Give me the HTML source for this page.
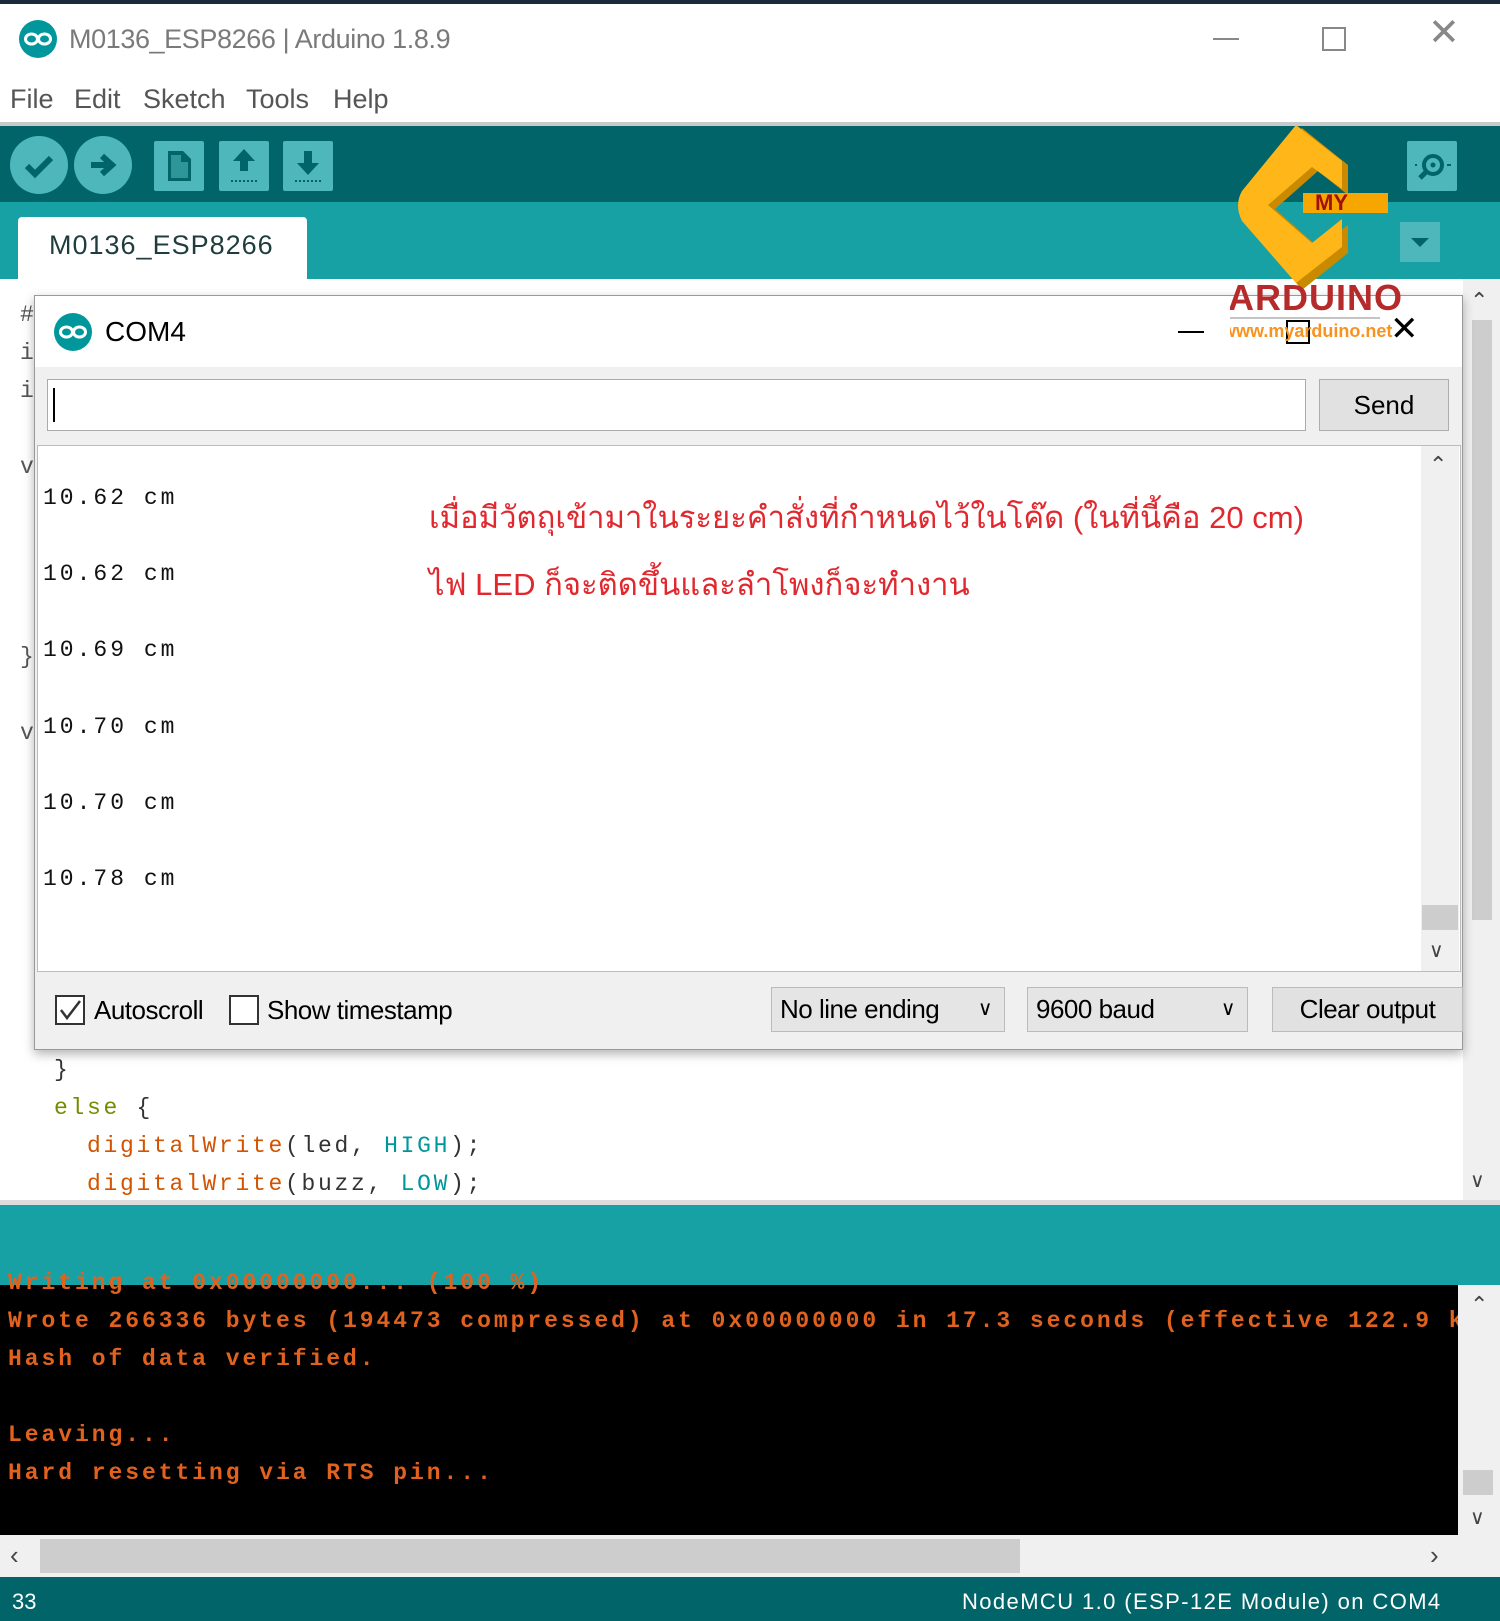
<!DOCTYPE html>
<html><head><meta charset="utf-8"><style>
*{margin:0;padding:0;box-sizing:border-box}
body{width:1500px;height:1621px;position:relative;overflow:hidden;background:#fff;font-family:"Liberation Sans",sans-serif}
.a{position:absolute}
.mono{font-family:"Liberation Mono",monospace}
.tb{background:#4db7bb;border-radius:2px}
</style></head><body>
<!-- title bar -->
<div class="a" style="left:0;top:0;width:1500px;height:4px;background:#1b2a3a"></div>
<svg class="a" style="left:19px;top:20px" width="38" height="38" viewBox="0 0 38 38"><circle cx="19" cy="19" r="19" fill="#00979c"/><ellipse cx="12.5" cy="19" rx="6" ry="5" fill="none" stroke="#fff" stroke-width="3"/><ellipse cx="25.5" cy="19" rx="6" ry="5" fill="none" stroke="#fff" stroke-width="3"/></svg>
<div class="a" style="left:69px;top:24px;font-size:27px;color:#7a7a7a;letter-spacing:-.4px">M0136_ESP8266 | Arduino 1.8.9</div>
<div class="a" style="left:1213px;top:38px;width:26px;height:2px;background:#888"></div>
<div class="a" style="left:1322px;top:27px;width:24px;height:24px;border:2px solid #888"></div>
<div class="a" style="left:1428px;top:14px;font-size:38px;color:#888;line-height:1">✕</div>
<div class="a" style="left:10px;top:84px;font-size:27px;color:#555">File</div>
<div class="a" style="left:74px;top:84px;font-size:27px;color:#555">Edit</div>
<div class="a" style="left:143px;top:84px;font-size:27px;color:#555">Sketch</div>
<div class="a" style="left:246px;top:84px;font-size:27px;color:#555">Tools</div>
<div class="a" style="left:333px;top:84px;font-size:27px;color:#555">Help</div>
<div class="a" style="left:0;top:122px;width:1500px;height:4px;background:#c9c9c9"></div>
<!-- toolbar -->
<div class="a" style="left:0;top:126px;width:1500px;height:76px;background:#006468"></div>
<div class="a" style="left:10px;top:136px;width:58px;height:58px;border-radius:50%;background:#4db7bb"></div>
<svg class="a" style="left:10px;top:136px" width="58" height="58"><path d="M17 30 L25 38 L41 22" stroke="#006468" stroke-width="6" fill="none"/></svg>
<div class="a" style="left:74px;top:136px;width:58px;height:58px;border-radius:50%;background:#4db7bb"></div>
<svg class="a" style="left:74px;top:136px" width="58" height="58"><path d="M17 29 H33 M28 20 L38 29 L28 38" stroke="#006468" stroke-width="6" fill="none"/></svg>
<div class="a tb" style="left:154px;top:141px;width:50px;height:50px"></div>
<svg class="a" style="left:154px;top:141px" width="50" height="50"><path d="M14 10 H29 L37 18 V40 H14 Z" fill="#006468"/><path d="M17 14 H27 V21 H34 V37 H17Z" fill="#4db7bb" opacity=".6"/></svg>
<div class="a tb" style="left:219px;top:141px;width:50px;height:50px"></div>
<svg class="a" style="left:219px;top:141px" width="50" height="50"><path d="M25 8 L36 20 H29 V30 H21 V20 H14Z" fill="#006468"/><path d="M12 40 H38" stroke="#006468" stroke-width="2" stroke-dasharray="2 2"/></svg>
<div class="a tb" style="left:283px;top:141px;width:50px;height:50px"></div>
<svg class="a" style="left:283px;top:141px" width="50" height="50"><path d="M25 34 L36 22 H29 V10 H21 V22 H14Z" fill="#006468"/><path d="M12 40 H38" stroke="#006468" stroke-width="2" stroke-dasharray="2 2"/></svg>
<div class="a tb" style="left:1407px;top:141px;width:50px;height:50px"></div>
<svg class="a" style="left:1407px;top:141px" width="50" height="50"><circle cx="26" cy="24" r="9" fill="none" stroke="#006468" stroke-width="4"/><circle cx="26" cy="24" r="2.5" fill="#006468"/><path d="M19 31 L13 37" stroke="#006468" stroke-width="5"/><path d="M8 24h2M40 24h4" stroke="#006468" stroke-width="2"/></svg>
<!-- tab bar -->
<div class="a" style="left:0;top:202px;width:1500px;height:77px;background:#17a1a5"></div>
<div class="a" style="left:18px;top:217px;width:289px;height:62px;background:#fff;border-radius:4px 4px 0 0"></div>
<div class="a" style="left:49px;top:230px;font-size:27px;color:#1f3d3e;letter-spacing:1px">M0136_ESP8266</div>
<div class="a" style="left:1400px;top:222px;width:40px;height:40px;background:#4db7bb"></div>
<svg class="a" style="left:1400px;top:222px" width="40" height="40"><path d="M11 16 H29 L20 25Z" fill="#006468"/></svg>
<!-- editor -->
<div class="a" style="left:1463px;top:279px;width:37px;height:921px;background:#f0f0f0"></div>
<div class="a" style="left:1472px;top:320px;width:20px;height:600px;background:#cdcdcd"></div>
<div class="a" style="left:1470px;top:288px;font-size:22px;color:#444">⌃</div>
<div class="a" style="left:1470px;top:1168px;font-size:20px;color:#444">∨</div>
<div class="a mono" style="left:20px;top:296px;font-size:23px;color:#555;line-height:38px">#<br>i<br>i<br><br>v<br><br><br><br><br>}<br><br>v</div>
<div class="a mono" style="left:54px;top:1051px;font-size:23px;line-height:38px;white-space:pre;color:#333;letter-spacing:2.7px">}
<span style="color:#728e00">else</span> {
  <span style="color:#d35400">digitalWrite</span>(led, <span style="color:#00979c">HIGH</span>);
  <span style="color:#d35400">digitalWrite</span>(buzz, <span style="color:#00979c">LOW</span>);</div>
<!-- console -->
<div class="a" style="left:0;top:1200px;width:1500px;height:5px;background:#dcdcdc"></div>
<div class="a" style="left:0;top:1205px;width:1500px;height:80px;background:#17a1a5"></div>
<div class="a" style="left:0;top:1285px;width:1458px;height:250px;background:#000"></div>
<div class="a" style="left:1458px;top:1285px;width:42px;height:250px;background:#f0f0f0"></div>
<div class="a" style="left:1463px;top:1470px;width:30px;height:25px;background:#cdcdcd"></div>
<div class="a" style="left:1470px;top:1292px;font-size:22px;color:#444">⌃</div>
<div class="a" style="left:1470px;top:1505px;font-size:20px;color:#444">∨</div>
<div class="a mono" style="left:8px;top:1264px;font-size:23px;line-height:38px;color:#e0621e;white-space:pre;font-weight:bold;width:1450px;overflow:hidden;height:270px;letter-spacing:2.95px">Writing at 0x00000000... (100 %)
Wrote 266336 bytes (194473 compressed) at 0x00000000 in 17.3 seconds (effective 122.9 kbit/s)
Hash of data verified.

Leaving...
Hard resetting via RTS pin...</div>
<div class="a" style="left:0;top:1535px;width:1500px;height:42px;background:#f0f0f0"></div>
<div class="a" style="left:40px;top:1539px;width:980px;height:34px;background:#cdcdcd"></div>
<div class="a" style="left:10px;top:1540px;font-size:26px;color:#444">‹</div>
<div class="a" style="left:1430px;top:1540px;font-size:26px;color:#444">›</div>
<div class="a" style="left:0;top:1577px;width:1500px;height:44px;background:#006468"></div>
<div class="a" style="left:12px;top:1589px;font-size:22px;color:#fff">33</div>
<div class="a" style="left:962px;top:1589px;font-size:22px;color:#fff;letter-spacing:1.4px">NodeMCU 1.0 (ESP-12E Module) on COM4</div>
<!-- serial monitor -->
<div class="a" style="left:34px;top:295px;width:1429px;height:755px;background:#f0f0f0;border:1px solid #999;box-shadow:0 4px 10px rgba(0,0,0,.3)"></div>
<div class="a" style="left:35px;top:296px;width:1427px;height:71px;background:#fff"></div>
<svg class="a" style="left:54px;top:313px" width="38" height="38" viewBox="0 0 38 38"><circle cx="19" cy="19" r="19" fill="#00979c"/><ellipse cx="12.5" cy="19" rx="6" ry="5" fill="none" stroke="#fff" stroke-width="3"/><ellipse cx="25.5" cy="19" rx="6" ry="5" fill="none" stroke="#fff" stroke-width="3"/></svg>
<div class="a" style="left:105px;top:316px;font-size:28px;color:#000">COM4</div>
<div class="a" style="left:1178px;top:331px;width:26px;height:2px;background:#000"></div>
<div class="a" style="left:1286px;top:320px;width:24px;height:24px;border:2px solid #000"></div>
<div class="a" style="left:1390px;top:312px;font-size:34px;color:#000;line-height:1">✕</div>
<div class="a" style="left:47px;top:379px;width:1259px;height:52px;background:#fff;border:1px solid #aaa"></div>
<div class="a" style="left:53px;top:388px;width:2px;height:34px;background:#000"></div>
<div class="a" style="left:1319px;top:379px;width:130px;height:52px;background:#e1e1e1;border:1px solid #adadad;font-size:26px;text-align:center;line-height:50px">Send</div>
<div class="a" style="left:37px;top:445px;width:1424px;height:527px;background:#fff;border:1px solid #bbb"></div>
<div class="a" style="left:1421px;top:446px;width:38px;height:525px;background:#f0f0f0"></div>
<div class="a" style="left:1422px;top:905px;width:36px;height:25px;background:#cdcdcd"></div>
<div class="a" style="left:1429px;top:452px;font-size:22px;color:#444">⌃</div>
<div class="a" style="left:1429px;top:938px;font-size:20px;color:#444">∨</div>
<div class="a mono" style="left:43px;top:460px;font-size:23px;line-height:76.2px;white-space:pre;color:#111;letter-spacing:3px">10.62 cm
10.62 cm
10.69 cm
10.70 cm
10.70 cm
10.78 cm</div>
<div class="a" style="left:429px;top:484px;font-size:31px;line-height:67px;color:#e0282e;font-family:'Liberation Sans','Noto Sans CJK SC',sans-serif">เมื่อมีวัตถุเข้ามาในระยะคำสั่งที่กำหนดไว้ในโค๊ด (ในที่นี้คือ 20 cm)<br>ไฟ LED ก็จะติดขึ้นและลำโพงก็จะทำงาน</div>
<div class="a" style="left:55px;top:995px;width:30px;height:30px;border:2px solid #333;background:#fff"></div>
<svg class="a" style="left:55px;top:995px" width="30" height="30"><path d="M6 15 L12 23 L25 6" stroke="#333" stroke-width="2.5" fill="none"/></svg>
<div class="a" style="left:94px;top:995px;font-size:26px;color:#000;letter-spacing:-.5px">Autoscroll</div>
<div class="a" style="left:229px;top:995px;width:30px;height:30px;border:2px solid #333;background:#fff"></div>
<div class="a" style="left:267px;top:995px;font-size:26px;color:#000;letter-spacing:-.5px">Show timestamp</div>
<div class="a" style="left:771px;top:987px;width:234px;height:45px;background:#e5e5e5;border:1px solid #bbb;font-size:26px;line-height:43px;padding-left:8px;letter-spacing:-.5px">No line ending<span style="position:absolute;right:12px;font-size:20px">∨</span></div>
<div class="a" style="left:1027px;top:987px;width:221px;height:45px;background:#e5e5e5;border:1px solid #bbb;font-size:26px;line-height:43px;padding-left:8px;letter-spacing:-.5px">9600 baud<span style="position:absolute;right:12px;font-size:20px">∨</span></div>
<div class="a" style="left:1272px;top:987px;width:191px;height:45px;background:#e1e1e1;border:1px solid #bbb;font-size:26px;line-height:43px;text-align:center;letter-spacing:-.5px">Clear output</div>
<!-- watermark logo -->
<svg class="a" style="left:1230px;top:125px" width="180" height="220" viewBox="0 0 180 220">
<path d="M72 3 L118 40 V70 L88 46 L45 84 L88 122 L118 100 V128 L72 165 L18 100 Q10 84 18 70 Z" fill="#c98a00"/>
<path d="M66 0 L112 36 V64 L82 42 L38 80 L82 118 L112 94 V122 L66 158 L12 96 Q4 80 12 66 Z" fill="#ffb619"/>
<rect x="73" y="68" width="85" height="20" fill="#f7a600"/>
<text x="85" y="85" font-family="Liberation Sans" font-weight="bold" font-size="22" fill="#a01010">MY</text>
<text x="-2" y="185" font-family="Liberation Sans" font-weight="bold" font-size="36" fill="#b52a2a" letter-spacing="1">ARDUINO</text>
<line x1="-5" y1="193" x2="150" y2="193" stroke="#888" stroke-width="1"/>
<text x="-8" y="212" font-family="Liberation Sans" font-weight="bold" font-size="18" fill="#f7931e">www.myarduino.net</text>
</svg>
</body></html>
